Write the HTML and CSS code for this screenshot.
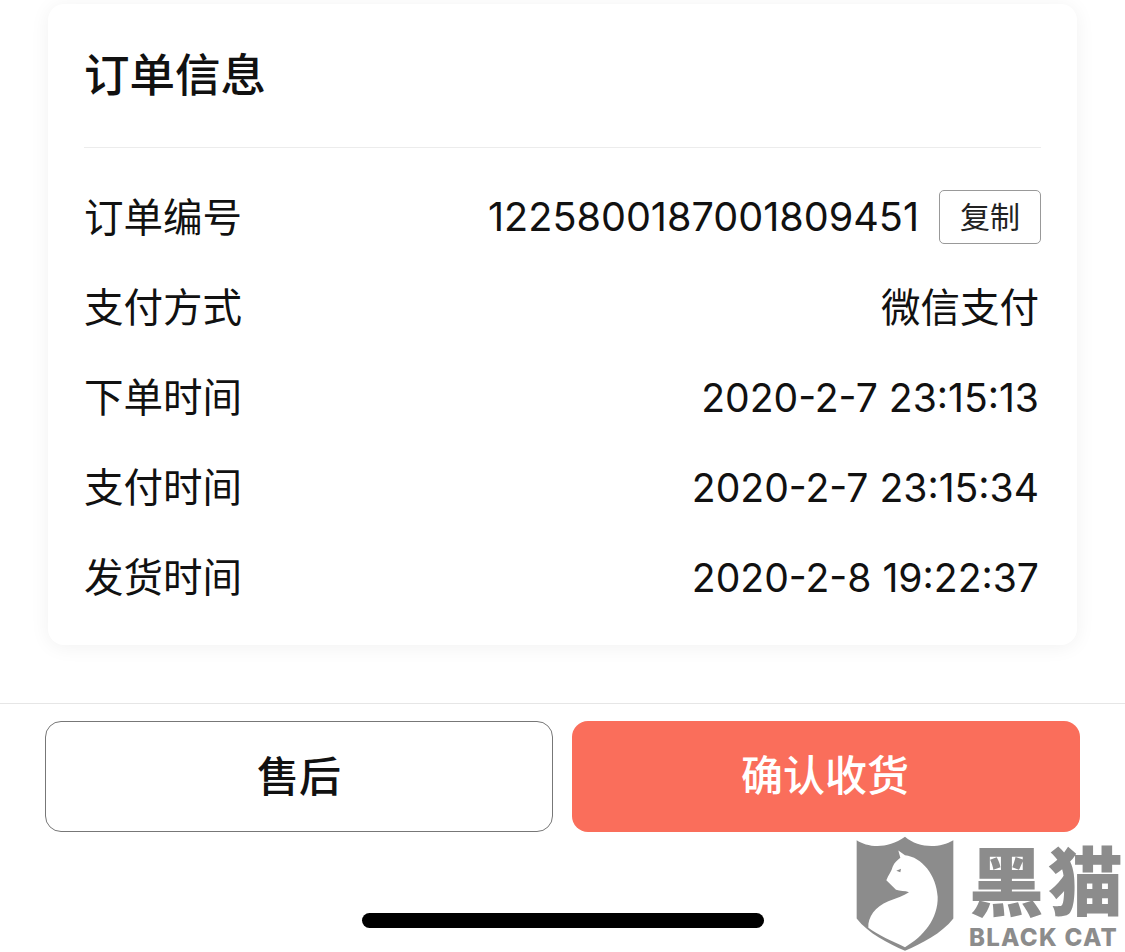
FILE: index.html
```html
<!DOCTYPE html>
<html>
<head>
	<meta http-equiv="Content-Type" content="text/html;charset=utf-8"/>
	<title>订单信息</title>
	<link rel="stylesheet" href="styles.css">
</head>
<body>
	<div class="page">
		<div class="card">
			<div class="card-title">订单信息</div>
			<div class="rows">
				<div class="row">
					<span class="label">订单编号</span>
					<span class="value value-no">1225800187001809451<a class="copy">复制</a></span>
				</div>
				<div class="row">
					<span class="label">支付方式</span>
					<span class="value value-cn">微信支付</span>
				</div>
				<div class="row">
					<span class="label">下单时间</span>
					<span class="value">2020-2-7 23:15:13</span>
				</div>
				<div class="row">
					<span class="label">支付时间</span>
					<span class="value">2020-2-7 23:15:34</span>
				</div>
				<div class="row">
					<span class="label">发货时间</span>
					<span class="value">2020-2-8 19:22:37</span>
				</div>
			</div>
		</div>
		<div class="bottom">
			<div class="btn btn-plain">售后</div>
			<div class="btn btn-main">确认收货</div>
		</div>
		<div class="home-bar"></div>
		<div class="mark">
			<svg class="mark-logo" viewBox="90 40 300 350" width="100" height="117">
				<path fill="#8c8c8c" d="M95 55 C125 75 185 85 240 45 C280 80 345 80 385 55 L385 290 C350 335 290 365 240 387 C190 365 130 335 95 290 Z"/>
				<path fill="#fff" d="M220 86 L240 100 C290 105 335 160 338 225 C340 290 295 345 240 376 C200 358 160 340 130 318 C128 285 150 255 190 238 C215 228 235 222 252 211 C240 207 225 208 213 204 L184 175 C190 160 200 148 203 135 C208 122 218 115 226 108 Z"/>
				<path fill="#8c8c8c" d="M214 147 L228 141 L226 151 Z"/>
			</svg>
			<div class="mark-text">
				<div class="mark-cn">黑猫</div>
				<div class="mark-en">BLACK CAT</div>
			</div>
		</div>
	</div>
</body>
</html>
```
FILE: styles.css
```css
*{
	margin: 0;
	padding: 0;
	box-sizing: border-box;
}
html,body{
	width: 1125px;
	height: 952px;
	overflow: hidden;
	background: #fff;
}
body{
	font-family: Inter, "Noto Sans CJK SC", sans-serif;
	color: #111;
}
.page{
	position: relative;
	height: 952px;
	padding-top: 4px;
}
.card{
	width: 1029px;
	height: 641px;
	margin-left: 48px;
	padding: 0 36px 0 37px;
	background: #fff;
	border-radius: 16px;
	box-shadow: 0 2px 20px rgba(0,0,0,.06);
}
.card-title{
	height: 144px;
	line-height: 144px;
	font-size: 45.5px;
	font-weight: 500;
	margin-left: -1px;
	border-bottom: 1px solid #ececec;
}
.rows{
	padding-top: 24px;
}
.row{
	display: flex;
	justify-content: space-between;
	align-items: center;
	height: 90px;
	font-size: 39.1px;
}
.label{
	margin-left: -1px;
	padding-bottom: 5px;
	font-size: 39.5px;
}
.value{
	display: flex;
	align-items: center;
	padding-right: 2px;
}
.value-no{
	font-size: 39.6px;
}
.value-cn{
	padding-bottom: 5px;
	font-size: 39.5px;
}
.copy{
	display: block;
	width: 102px;
	height: 54px;
	line-height: 53px;
	margin: 0 -2px 0 20px;
	text-align: center;
	font-size: 30px;
	color: #222;
	border: 1px solid #999;
	border-radius: 5px;
}
.bottom{
	display: grid;
	grid-template-columns: 1fr 1fr;
	gap: 19px;
	margin-top: 58px;
	padding: 17px 45px 0;
	border-top: 1px solid #e6e6e6;
}
.btn{
	height: 111px;
	line-height: 109px;
	text-align: center;
	font-size: 42px;
	font-weight: 500;
	border-radius: 16px;
}
.btn-plain{
	border: 1px solid #777;
}
.btn-main{
	padding-right: 2px;
	color: #fff;
	background: #fa6e5b;
}
.home-bar{
	width: 402px;
	height: 15px;
	margin: 81px auto 0;
	background: #000;
	border-radius: 8px;
}
.mark{
	position: absolute;
	left: 855px;
	top: 835px;
	display: flex;
	gap: 14px;
	color: #8c8c8c;
}
.mark-logo{
	display: block;
	flex: none;
}
.mark-cn{
	width: 160px;
	height: 72px;
	margin-top: 12px;
	line-height: 72px;
	font-size: 75px;
	font-weight: 900;
	letter-spacing: 4px;
	white-space: nowrap;
}
.mark-en{
	margin-top: 5px;
	font-size: 24px;
	line-height: 28px;
	font-weight: 800;
	letter-spacing: 1.3px;
	white-space: nowrap;
}
```
